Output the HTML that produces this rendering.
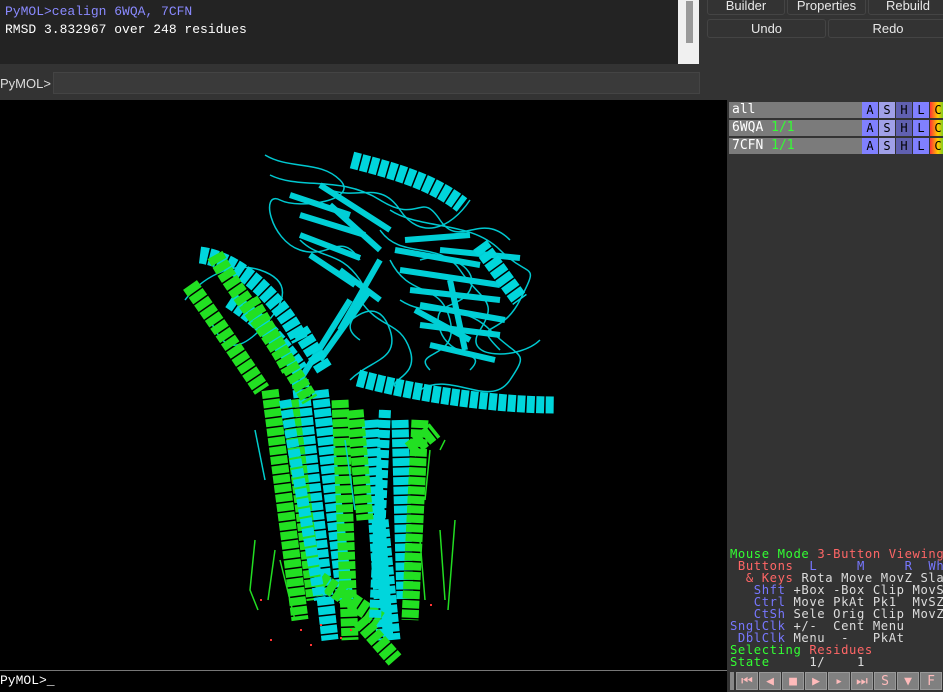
<!DOCTYPE html>
<html><head><meta charset="utf-8"><style>
*{margin:0;padding:0;box-sizing:border-box}
body{width:943px;height:692px;background:#333;position:relative;overflow:hidden;font-family:"DejaVu Sans Mono","Liberation Mono",monospace}
.abs{position:absolute}
#con{left:0;top:0;width:678px;height:64px;background:#232323;font-family:"Liberation Mono",monospace;font-size:13px;color:#fff}
#con div{position:absolute;left:5px;white-space:pre}
.btn{position:absolute;border:1px solid #444;border-radius:3px;background:#333;color:#e8e8e8;font-family:"Liberation Sans",sans-serif;font-size:13px;text-align:center;line-height:17px;height:19px}
.row{position:absolute;left:728px;height:16px;width:215px}
.nm{position:absolute;left:1px;top:0;width:133px;height:16px;background:#7b7b7b;color:#fff;font-size:13px;line-height:16px;padding-left:3px}
.b{position:absolute;top:0;width:16px;height:16px;font-size:12px;line-height:16px;text-align:center;color:#000}
#mm{left:730px;top:548px;font-size:12.2px;line-height:12px;white-space:pre;color:#ddd;letter-spacing:0.6px}
.g{color:#3f3}.r{color:#f66}.bl{color:#77f}
.pb{position:absolute;top:672px;width:22px;height:18px;background:#808080;border:1px solid #999;color:#fbb;font-size:13px;text-align:center;line-height:17px}
</style></head><body>
<div id="con" class="abs">
<div style="top:4px;color:#8a8aff">PyMOL&gt;cealign 6WQA, 7CFN</div>
<div style="top:22px">RMSD 3.832967 over 248 residues</div>
</div>
<div class="abs" style="left:678px;top:0;width:21px;height:64px;background:#f0f0f0"></div>
<div class="abs" style="left:686px;top:1px;width:7px;height:42px;background:#999"></div>
<div class="abs" style="left:0;top:76px;font-family:'Liberation Sans',sans-serif;font-size:13px;color:#ddd">PyMOL&gt;</div>
<div class="abs" style="left:53px;top:72px;width:647px;height:22px;background:#3a3a3a;border:1px solid #444"></div>
<div class="btn" style="left:707px;top:-4px;width:78px">Builder</div>
<div class="btn" style="left:787px;top:-4px;width:79px">Properties</div>
<div class="btn" style="left:868px;top:-4px;width:80px">Rebuild</div>
<div class="btn" style="left:707px;top:19px;width:119px">Undo</div>
<div class="btn" style="left:828px;top:19px;width:120px">Redo</div>

<div class="abs" style="left:0;top:100px;width:727px;height:570px;background:#000"></div>
<svg class="abs" style="left:0;top:100px" width="727" height="570" viewBox="0 100 727 570">
<g fill="none" stroke-linecap="butt">
<g stroke="#00c8d0" stroke-width="1.5">
<path d="M265 155 C290 170 320 160 340 180 S300 210 280 200 S270 240 300 250 S340 230 360 260"/>
<path d="M270 175 C300 190 340 175 380 200 S420 190 440 220 S480 210 510 240"/>
<path d="M390 210 C420 230 470 220 500 250 S540 260 520 300 S470 320 500 350"/>
<path d="M400 300 C430 320 460 300 490 330 S530 350 510 380 S450 370 420 390"/>
<path d="M185 300 C200 280 230 260 260 270 S290 300 260 330 S220 340 210 320"/>
<path d="M300 240 C320 260 340 250 360 280 S330 320 360 340"/>
<path d="M420 260 C450 250 480 270 470 290 S430 300 440 330 S490 350 470 370"/>
<path d="M340 330 C360 310 380 300 390 330 S370 360 350 380"/>
<path d="M380 230 C400 260 440 240 460 270 S500 300 480 330 S520 360 540 340"/>
<path d="M330 190 C360 200 380 180 400 210 S450 230 470 200"/>
<path d="M390 260 C410 300 440 280 450 320 S410 350 430 370"/>
<path d="M360 300 C380 330 400 320 410 350 S380 380 400 390"/>
</g>
<g stroke="#00cfd6" stroke-width="6">
<path d="M290 195 L350 215"/><path d="M300 215 L365 235"/><path d="M300 235 L360 258"/><path d="M310 255 L355 285"/>
<path d="M320 185 L390 230"/><path d="M330 205 L380 250"/><path d="M340 270 L380 300"/>
<path d="M395 250 L480 265"/><path d="M400 270 L500 285"/><path d="M410 290 L500 300"/><path d="M420 305 L505 320"/><path d="M420 325 L500 335"/><path d="M430 345 L495 360"/>
<path d="M405 240 L470 235"/><path d="M440 250 L520 258"/><path d="M415 310 L470 340"/><path d="M450 280 L465 350"/>
<path d="M370 290 L320 360"/><path d="M350 300 L300 380"/><path d="M380 260 L340 330"/>
</g>
<g stroke="#00d6dc" stroke-width="17" stroke-dasharray="8 1.5">
<path d="M352 160 C390 170 430 180 462 205"/>
<path d="M358 378 C420 395 500 405 555 405"/>
<path d="M200 255 C240 260 280 300 300 340"/>
<path d="M230 300 C260 320 280 340 300 370"/>
<path d="M480 245 L520 300"/>
<path d="M300 330 L325 370"/>
<path d="M300 380 L330 640"/>
<path d="M320 390 L345 600"/>
<path d="M370 420 L385 640"/>
<path d="M400 420 L405 600"/>
<path d="M380 520 L392 640"/>
</g>
<g stroke="#22e022" stroke-width="17" stroke-dasharray="8 1.5">
<path d="M190 285 C215 320 235 350 262 390"/>
<path d="M215 255 C240 300 270 330 290 370"/>
<path d="M250 300 L310 400"/>
<path d="M270 390 L300 620"/>
<path d="M290 400 L315 600"/>
<path d="M340 400 L350 640"/>
<path d="M355 410 L365 520"/>
<path d="M420 420 L410 620"/>
<path d="M360 620 L395 660"/>
<path d="M320 580 L380 620"/>
<path d="M410 450 L435 430"/>
</g>
<g stroke="#00d6dc" stroke-width="12" stroke-dasharray="8 2">
<path d="M285 400 L320 600"/><path d="M385 410 L375 620"/>
</g>
<g stroke="#2d2" stroke-width="1.5">
<path d="M255 540 L250 590 L258 610"/><path d="M275 550 L268 600"/><path d="M440 530 L445 600"/><path d="M455 520 L448 610"/><path d="M430 450 L425 500"/><path d="M420 540 L425 600"/><path d="M280 560 L295 620"/><path d="M445 440 L440 450"/>
</g>
<g stroke="#0cc" stroke-width="1.5"><path d="M255 430 L265 480"/><path d="M345 440 L355 510"/></g>
<g stroke="#f33" stroke-width="2"><path d="M270 640h2M300 630h2M320 625h2M340 638h2M430 605h2M260 600h2M310 645h2M350 630h2"/></g>
</g>
</svg>

<div class="abs" style="left:727px;top:100px;width:216px;height:447px;background:#333"></div>
<div class="row" style="top:102px"><div class="nm">all</div></div>
<div class="row" style="top:120px"><div class="nm">6WQA <span class="g">1/1</span></div></div>
<div class="row" style="top:138px"><div class="nm">7CFN <span class="g">1/1</span></div></div>
<div class="abs" style="left:862px;top:102px;width:81px;height:54px">
<div class="b" style="left:0;top:0;background:#8080ff">A</div><div class="b" style="left:17px;top:0;background:#a0a0e8">S</div><div class="b" style="left:34px;top:0;background:#6060b0">H</div><div class="b" style="left:51px;top:0;background:#8080ff">L</div><div class="b" style="left:68px;top:0;background:linear-gradient(90deg,#f33,#fc0,#3c3)">C</div>
<div class="b" style="left:0;top:18px;background:#8080ff">A</div><div class="b" style="left:17px;top:18px;background:#a0a0e8">S</div><div class="b" style="left:34px;top:18px;background:#6060b0">H</div><div class="b" style="left:51px;top:18px;background:#8080ff">L</div><div class="b" style="left:68px;top:18px;background:linear-gradient(90deg,#f33,#fc0,#3c3)">C</div>
<div class="b" style="left:0;top:36px;background:#8080ff">A</div><div class="b" style="left:17px;top:36px;background:#a0a0e8">S</div><div class="b" style="left:34px;top:36px;background:#6060b0">H</div><div class="b" style="left:51px;top:36px;background:#8080ff">L</div><div class="b" style="left:68px;top:36px;background:linear-gradient(90deg,#f33,#fc0,#3c3)">C</div>
</div>
<div class="abs" style="left:727px;top:546px;width:216px;height:124px;background:#333"></div>
<div id="mm" class="abs"><span class="g">Mouse Mode </span><span class="r">3-Button Viewing</span>
<span class="r"> Buttons  </span><span class="bl">L     M     R  Wheel</span>
<span class="r">  &amp; Keys </span>Rota Move MovZ Slab
<span class="bl">   Shft </span>+Box -Box Clip MovS
<span class="bl">   Ctrl </span>Move PkAt Pk1  MvSZ
<span class="bl">   CtSh </span>Sele Orig Clip MovZ
<span class="bl">SnglClk </span>+/-  Cent Menu
<span class="bl"> DblClk </span>Menu  -   PkAt
<span class="g">Selecting </span><span class="r">Residues</span>
<span class="g">State </span>    1/    1</div>
<div class="abs" style="left:0;top:670px;width:727px;height:22px;background:#000;border-top:1px solid #777"></div>
<div class="abs" style="left:0;top:673px;font-size:13px;color:#fff;font-family:'Liberation Mono',monospace">PyMOL&gt;_</div>
<div class="abs" style="left:727px;top:670px;width:216px;height:22px;background:#333"></div>
<div class="abs" style="left:730px;top:672px;width:4px;height:18px;background:#888"></div>
<div class="pb" style="left:736px">⏮</div><div class="pb" style="left:759px">◀</div><div class="pb" style="left:782px">■</div><div class="pb" style="left:805px">▶</div><div class="pb" style="left:828px">▸</div><div class="pb" style="left:851px">⏭</div><div class="pb" style="left:874px">S</div><div class="pb" style="left:897px">▼</div><div class="pb" style="left:920px">F</div>
</body></html>
